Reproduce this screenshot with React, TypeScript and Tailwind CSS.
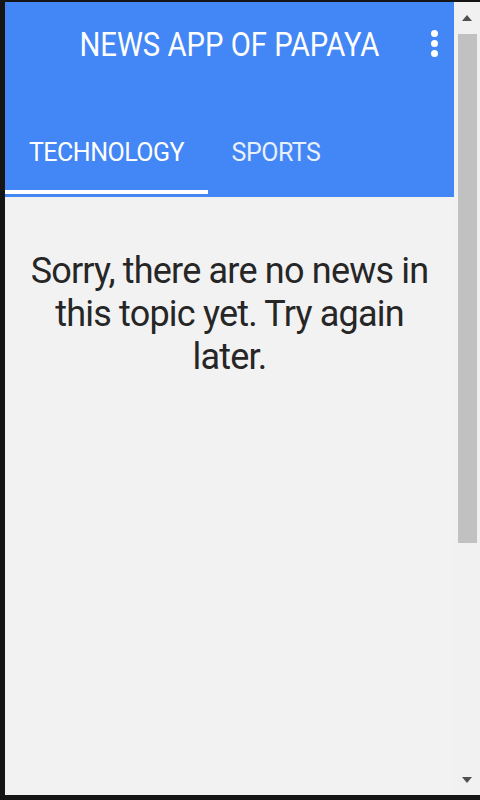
import React from 'react';

const App: React.FC = () => {
  return (
    <div className="w-[480px] h-[800px] bg-[#151515] pl-[5px] pt-[2px] pb-[5px] flex overflow-hidden" style={{ fontFamily: 'Roboto, "Liberation Sans", sans-serif' }}>
      {/* App area */}
      <div className="flex-1 flex flex-col bg-[#f2f2f2]">
        <header className="bg-[#4386f5] h-[195px] flex flex-col">
          <div className="relative h-[86px] flex items-center justify-center">
            <h1 className="text-white text-[34px] scale-x-[0.86] whitespace-nowrap">NEWS APP OF PAPAYA</h1>
            <div className="absolute right-[16px] top-[28px] flex flex-col gap-[3px]">
              <span className="block w-[7px] h-[7px] rounded-full bg-white" />
              <span className="block w-[7px] h-[7px] rounded-full bg-white" />
              <span className="block w-[7px] h-[7px] rounded-full bg-white" />
            </div>
          </div>
          <nav className="flex mt-auto">
            <div className="w-[203px] flex flex-col">
              <span className="h-[104px] flex items-center justify-center pt-[30px] text-white text-[25px] tracking-[-0.5px]">TECHNOLOGY</span>
              <span className="h-[4px] bg-white" />
            </div>
            <div className="w-[136px] flex flex-col">
              <span className="h-[104px] flex items-center justify-center pt-[30px] text-[#e8effd] text-[25px] tracking-[-0.5px]">SPORTS</span>
              <span className="h-[4px]" />
            </div>
          </nav>
          <div className="h-[3px]" />
        </header>
        <main className="flex-1 px-[20px] pt-[53px]">
          <p className="text-center text-[#262626] text-[36px] leading-[43px] tracking-[-0.8px]">
            Sorry, there are no news in this topic yet. Try again later.
          </p>
        </main>
      </div>
      {/* Scrollbar */}
      <div className="w-[26px] bg-[#f1f1f1] flex flex-col items-center">
        <div className="h-[32px] flex items-center justify-center">
          <span className="block w-0 h-0 border-l-[5px] border-r-[5px] border-b-[6px] border-l-transparent border-r-transparent border-b-[#505050]" />
        </div>
        <div className="w-[19px] h-[509px] bg-[#c1c1c1]" />
        <div className="flex-1" />
        <div className="h-[30px] flex items-center justify-center">
          <span className="block w-0 h-0 border-l-[5px] border-r-[5px] border-t-[6px] border-l-transparent border-r-transparent border-t-[#505050]" />
        </div>
      </div>
    </div>
  );
};

export default App;
